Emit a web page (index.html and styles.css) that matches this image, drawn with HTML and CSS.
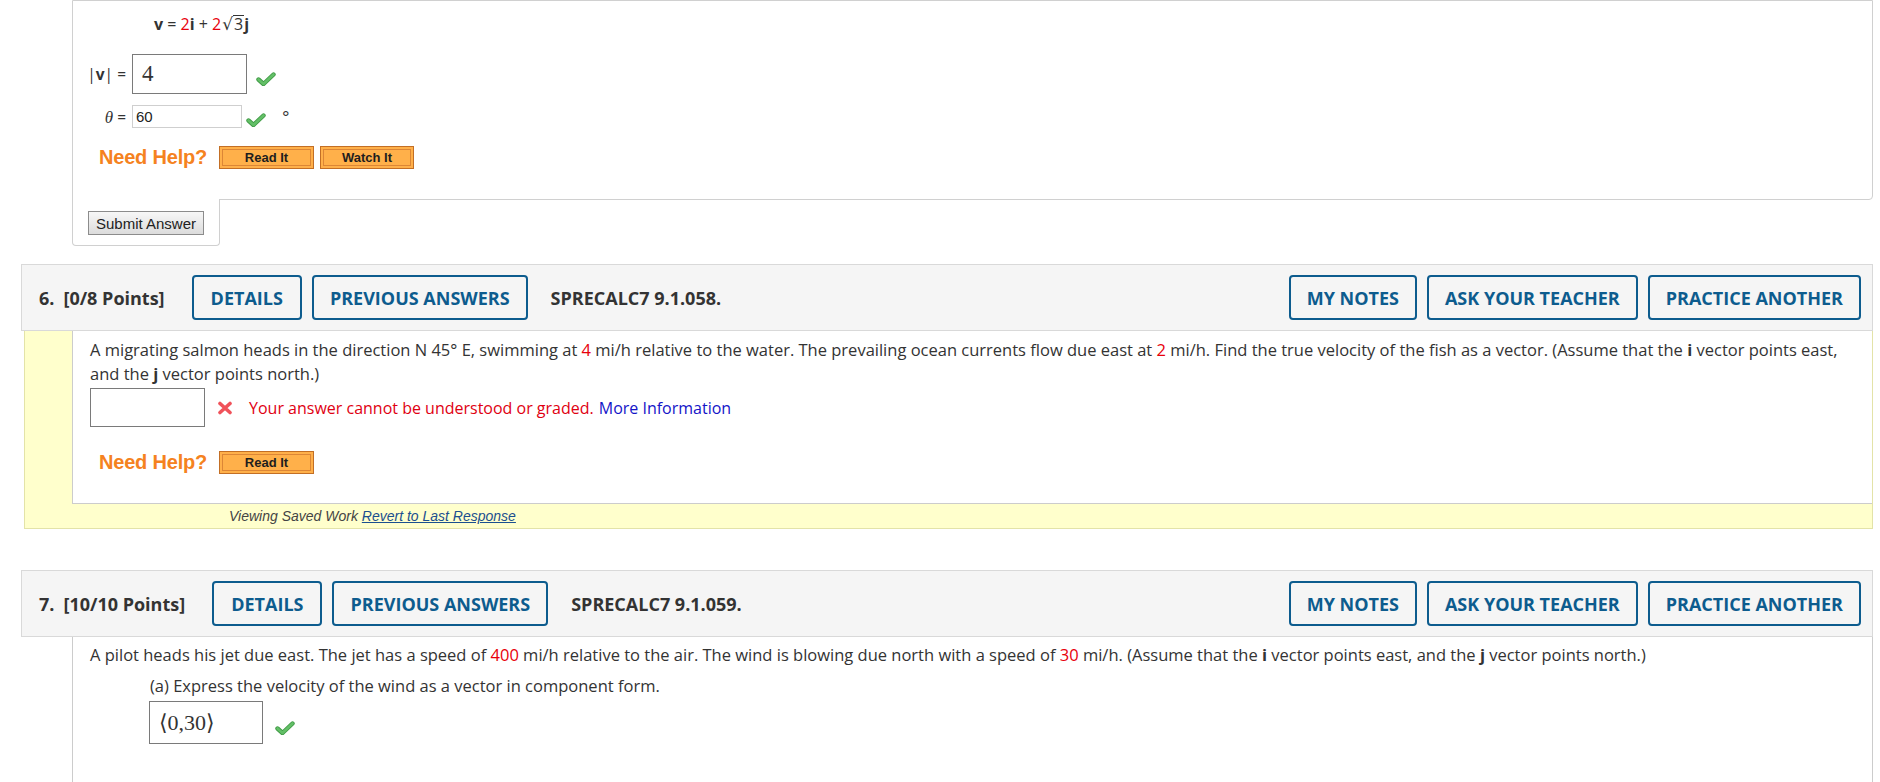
FILE: index.html
```html
<!DOCTYPE html>
<html lang="en">
<head>
<meta charset="utf-8">
<title>Vectors</title>
<link rel="stylesheet" href="styles.css">
</head>
<body>
<div class="page">

  <section class="prev">
    <div class="prevbody">
      <div class="vec"><b>v</b> = <span class="red">2</span><b>i</b> + <span class="red">2</span><span class="rad">√</span><span class="radicand">3</span><b>j</b></div>
      <div class="ansrow big">
        <span class="lbl">|<b>v</b>| =</span>
        <span class="inp inp-big">4</span>
        <svg class="check c1" width="20" height="14" viewBox="0 0 20 14"><path d="M2.5 7.5 L7.5 12 L17.5 2.5" fill="none" stroke="#3f9a45" stroke-width="4.4" stroke-linecap="round" stroke-linejoin="round"/><path d="M2.5 7.5 L7.5 12 L17.5 2.5" fill="none" stroke="#63bf67" stroke-width="2.6" stroke-linecap="round" stroke-linejoin="round"/></svg>
      </div>
      <div class="ansrow small">
        <span class="lbl"><i class="theta">θ</i> =</span>
        <span class="inp inp-small">60</span>
        <svg class="check c2" width="20" height="14" viewBox="0 0 20 14"><path d="M2.5 7.5 L7.5 12 L17.5 2.5" fill="none" stroke="#3f9a45" stroke-width="4.4" stroke-linecap="round" stroke-linejoin="round"/><path d="M2.5 7.5 L7.5 12 L17.5 2.5" fill="none" stroke="#63bf67" stroke-width="2.6" stroke-linecap="round" stroke-linejoin="round"/></svg>
        <span class="deg">°</span>
      </div>
      <div class="help">
        <span class="needhelp">Need Help?</span>
        <button class="hbtn">Read It</button>
        <button class="hbtn">Watch It</button>
      </div>
    </div>
    <div class="submitbox"><button class="submit">Submit Answer</button></div>
  </section>

  <section class="q q6">
    <header class="qhead">
      <span class="pts"><span class="num">6.</span>[0/8 Points]</span>
      <button class="qbtn">DETAILS</button>
      <button class="qbtn">PREVIOUS ANSWERS</button>
      <span class="code">SPRECALC7 9.1.058.</span>
      <span class="right">
        <button class="qbtn">MY NOTES</button>
        <button class="qbtn">ASK YOUR TEACHER</button>
        <button class="qbtn">PRACTICE ANOTHER</button>
      </span>
    </header>
    <div class="saved">
      <div class="qbody body6">
        <p class="text">A migrating salmon heads in the direction N 45° E, swimming at <span class="red">4</span> mi/h relative to the water. The prevailing ocean currents flow due east at <span class="red">2</span> mi/h. Find the true velocity of the fish as a vector. (Assume that the <b>i</b> vector points east, and the <b>j</b> vector points north.)</p>
        <div class="ansrow6">
          <span class="inp inp-empty"></span>
          <svg class="xmark" width="16" height="14" viewBox="0 0 16 14"><path d="M3 2.5 L13 11.5 M13 2.5 L3 11.5" stroke="#f0525a" stroke-width="3.6" stroke-linecap="round"/></svg>
          <span class="err">Your answer cannot be understood or graded.</span>
          <a class="more" href="#">More Information</a>
        </div>
        <div class="help help6">
          <span class="needhelp">Need Help?</span>
          <button class="hbtn">Read It</button>
        </div>
      </div>
      <div class="savednote">Viewing Saved Work <a href="#">Revert to Last Response</a></div>
    </div>
  </section>

  <section class="q q7">
    <header class="qhead">
      <span class="pts"><span class="num">7.</span>[10/10 Points]</span>
      <button class="qbtn">DETAILS</button>
      <button class="qbtn">PREVIOUS ANSWERS</button>
      <span class="code">SPRECALC7 9.1.059.</span>
      <span class="right">
        <button class="qbtn">MY NOTES</button>
        <button class="qbtn">ASK YOUR TEACHER</button>
        <button class="qbtn">PRACTICE ANOTHER</button>
      </span>
    </header>
    <div class="qbody body7">
      <p class="text">A pilot heads his jet due east. The jet has a speed of <span class="red">400</span> mi/h relative to the air. The wind is blowing due north with a speed of <span class="red">30</span> mi/h. (Assume that the <b>i</b> vector points east, and the <b>j</b> vector points north.)</p>
      <p class="part">(a) Express the velocity of the wind as a vector in component form.</p>
      <div class="ansrow7">
        <span class="inp inp-vec">⟨0,30⟩</span>
        <svg class="check c3" width="20" height="14" viewBox="0 0 20 14"><path d="M2.5 7.5 L7.5 12 L17.5 2.5" fill="none" stroke="#3f9a45" stroke-width="4.4" stroke-linecap="round" stroke-linejoin="round"/><path d="M2.5 7.5 L7.5 12 L17.5 2.5" fill="none" stroke="#63bf67" stroke-width="2.6" stroke-linecap="round" stroke-linejoin="round"/></svg>
      </div>
    </div>
  </section>

</div>
</body>
</html>
```

FILE: styles.css
```css
* { box-sizing: border-box; }
html, body { margin: 0; padding: 0; background: #fff; }
body {
  font-family: "Open Sans", "Noto Sans", sans-serif;
  font-size: 16.5px;
  color: #333;
  overflow: hidden;
}
.page { padding: 0 7px 0 21px; }
.red { color: #e8000b; }
p { margin: 0; }

/* ---------- previous question remainder ---------- */
.prevbody {
  margin-left: 51px;
  border: 1px solid #d0d0d0;
  border-bottom-right-radius: 4px;
  background: #fff;
  padding: 12px 0 30px;
}
.vec {
  margin-left: 81px;
  line-height: 22px;
  font-size: 16px;
  color: #333;
  white-space: nowrap;
}
.vec b { font-weight: 700; }
.rad { font-family: "DejaVu Sans", sans-serif; font-size: 17px; margin-left: 1px; }
.radicand { border-top: 1px solid #333; padding: 0 1px; line-height: 16px; display: inline-block; }

.ansrow { display: flex; align-items: center; }
.ansrow.big { margin-top: 19px; height: 40px; }
.ansrow.small { margin-top: 11px; height: 23px; }
.lbl {
  width: 53px;
  margin-right: 6px;
  text-align: right;
  font-size: 15.5px;
  color: #333;
  white-space: nowrap;
}
.theta { font-family: "Liberation Serif", serif; font-size: 17px; }
.inp {
  display: inline-flex;
  align-items: center;
  background: #fff;
}
.inp-big {
  width: 115px;
  height: 40px;
  border: 1px solid #7a7a7a;
  padding-left: 9px;
  font-family: "Liberation Serif", serif;
  font-size: 23px;
  color: #333;
}
.inp-small {
  width: 110px;
  height: 23px;
  border: 1px solid #cfcfcf;
  padding-left: 3px;
  font-family: "Liberation Sans", Arial, sans-serif;
  font-size: 15px;
  color: #222;
}
.check { display: block; flex: none; }
.c1 { margin-left: 9px; margin-top: 9px; }
.c2 { margin-left: 4px; margin-top: 7px; }
.deg {
  margin-left: 16px;
  align-self: flex-start;
  font-family: "Liberation Sans", Arial, sans-serif;
  font-size: 19px;
  line-height: 14px;
  margin-top: 6px;
  color: #333;
}

.help { display: flex; align-items: center; height: 23px; margin-top: 18px; padding-left: 26px; }
.needhelp {
  font-family: "Liberation Sans", Arial, sans-serif;
  font-weight: 700;
  font-size: 20px;
  color: #f58220;
  margin-right: 12px;
  letter-spacing: -0.2px;
}
.hbtn {
  width: 95px;
  height: 23px;
  margin: 0 6px 0 0;
  padding: 0;
  border: 1px solid #c36f25;
  background: #ffb04a;
  box-shadow: inset 0 0 0 2px #ffb04a, inset 0 0 0 3px #dc8636;
  font-family: "Liberation Sans", Arial, sans-serif;
  font-weight: 700;
  font-size: 13px;
  color: #1e1e1e;
  cursor: pointer;
}
.hbtn + .hbtn { width: 94px; }

.submitbox {
  position: relative;
  margin: -1px 0 0 51px;
  width: 148px;
  background: #fff;
  border: 1px solid #d0d0d0;
  border-top: none;
  border-radius: 0 0 4px 4px;
  padding: 12px 0 10px 15px;
}
.submit {
  display: block;
  width: 116px;
  height: 24px;
  padding: 0;
  border: 1px solid #8c8c8c;
  background: linear-gradient(#f7f7f7, #dcdcdc);
  font-family: "Liberation Sans", Arial, sans-serif;
  font-size: 15px;
  color: #222;
}

/* ---------- question blocks ---------- */
.q6 { margin-top: 18px; }
.q7 { margin-top: 41px; }
.qhead {
  display: flex;
  align-items: center;
  background: #f5f5f5;
  border: 1px solid #d9d9d9;
  padding: 10px 11px 10px 17px;
  line-height: 24px;
}
.pts {
  font-weight: 700;
  font-size: 18px;
  color: #333;
  margin-right: 27px;
  white-space: nowrap;
}
.num { margin-right: 9px; }
.qbtn {
  height: 45px;
  padding: 0 16px;
  margin: 0 10px 0 0;
  border: 2px solid #0d5c8e;
  border-radius: 4px;
  background: transparent;
  font-family: "Open Sans", "Noto Sans", sans-serif;
  font-weight: 700;
  font-size: 18px;
  color: #0d5c8e;
  white-space: nowrap;
}
.qbtn:first-of-type { padding: 0 17px; }
.code {
  margin-left: 13px;
  font-weight: 700;
  font-size: 18px;
  color: #333;
  white-space: nowrap;
}
.right { margin-left: auto; display: flex; }
.right .qbtn { padding: 0 16px; }
.right .qbtn:last-child { margin-right: 0; }

.saved {
  margin-left: 3px;
  background: #ffffcc;
  border: 1px solid #e3e3a8;
  border-top: none;
}
.qbody {
  background: #fff;
  border-left: 1px solid #cccccc;
}
.body6 {
  margin-left: 47px;
  border-bottom: 1px solid #cccccc;
  padding: 7px 17px 29px 17px;
}
.text { line-height: 24px; }
.text b { font-weight: 700; color: #333; }
.ansrow6 { display: flex; align-items: center; margin-top: 2px; height: 39px; }
.inp-empty { width: 115px; height: 39px; border: 1px solid #7a7a7a; }
.xmark { display: block; margin-left: 12px; margin-right: 16px; flex: none; }
.err { color: #e00012; font-size: 16px; }
.more { color: #1414c8; text-decoration: none; margin-left: 5px; font-size: 16px; }
.help6 { margin-top: 24px; padding-left: 9px; }
.savednote {
  padding-left: 204px;
  line-height: 24px;
  font-family: "Liberation Sans", Arial, sans-serif;
  font-style: italic;
  font-size: 14px;
  color: #444;
}
.savednote a { color: #1b4f8f; }

.body7 {
  margin-left: 51px;
  border-right: 1px solid #cccccc;
  padding: 6px 17px 60px 17px;
}
.part { margin: 7px 0 0 60px; line-height: 24px; }
.ansrow7 { display: flex; margin: 3px 0 0 59px; }
.inp-vec {
  width: 114px;
  height: 43px;
  border: 1px solid #7a7a7a;
  padding-left: 9px;
  font-family: "Liberation Serif", "DejaVu Serif", serif;
  font-size: 22px;
  color: #333;
}
.c3 { margin-left: 12px; margin-top: 20px; }
```
